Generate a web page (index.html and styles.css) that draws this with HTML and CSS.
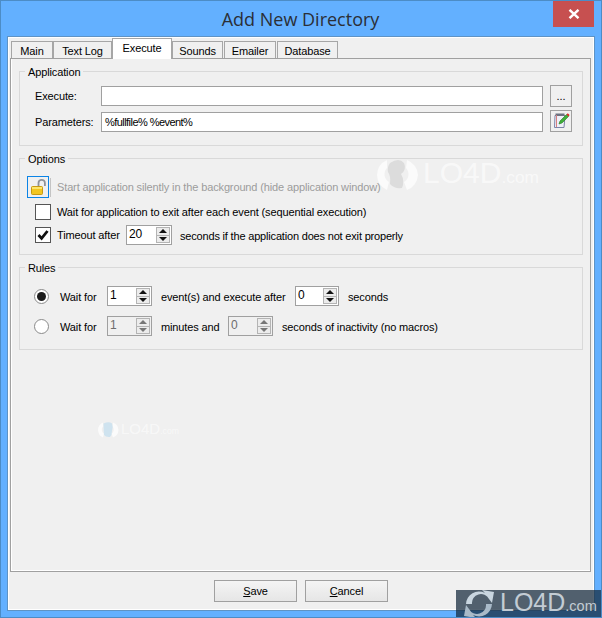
FILE: index.html
```html
<!DOCTYPE html>
<html lang="en">
<head>
<meta charset="utf-8">
<title>Add New Directory</title>
<link rel="stylesheet" href="styles.css">
</head>
<body>
<div class="window">
  <header class="titlebar">
    <h1 class="title">Add New Directory</h1>
    <button class="close" aria-label="Close">
      <svg width="12" height="10" viewBox="0 0 12 10"><path d="M1.5 0.8 L10.5 9.2 M10.5 0.8 L1.5 9.2" stroke="#fff" stroke-width="2.4" fill="none"/></svg>
    </button>
  </header>
  <div class="client">
    <nav class="tabs">
      <span class="tab tab-main">Main</span>
      <span class="tab tab-log">Text Log</span>
      <span class="tab tab-exec active">Execute</span>
      <span class="tab tab-sounds">Sounds</span>
      <span class="tab tab-mail">Emailer</span>
      <span class="tab tab-db">Database</span>
    </nav>
    <main class="pane">
      <fieldset class="group">
        <legend>Application</legend>
        <div class="body body-app">
          <div class="row">
            <label class="field-label">Execute:</label>
            <span class="input"></span>
            <button class="tool">...</button>
          </div>
          <div class="row row-end">
            <label class="field-label">Parameters:</label>
            <span class="input">%fullfile% %event%</span>
            <button class="tool">
              <svg width="18" height="18" viewBox="0 0 18 18">
                <path d="M3 3.5 H13 L12 15.5 H2.5 Z" fill="#eef0f8" stroke="#7d84a8"/>
                <path d="M3.5 1.5 H12.5 V4 H3.5 Z" fill="#6d7280"/>
                <path d="M4.5 3 V15" stroke="#d88080" stroke-width="1"/>
                <path d="M7 12 L8 9 L14.5 2.5 L16.5 4.5 L10 11 Z" fill="#3fae3a" stroke="#237a22" stroke-width=".6"/>
                <path d="M14.5 2.5 L15.8 1.2 L17.6 3 L16.5 4.5 Z" fill="#e02a20"/>
              </svg>
            </button>
          </div>
        </div>
      </fieldset>

      <fieldset class="group">
        <legend>Options</legend>
        <div class="body body-opt">
          <div class="row-lock">
            <button class="lock" aria-label="Toggle silent">
              <svg width="18" height="18" viewBox="0 0 18 18">
                <path d="M9.5 9 V5 A3.2 3.2 0 0 1 15.9 5 V8" fill="none" stroke="#8f9299" stroke-width="1.8"/>
                <rect x="2.5" y="8.5" width="11" height="8" rx="1" fill="#f3c620" stroke="#c79a12"/>
                <rect x="3" y="9" width="10" height="2" fill="#fde66a"/>
              </svg>
            </button>
            <span class="sep"></span>
            <span class="muted">Start application silently in the background (hide application window)</span>
          </div>
          <div class="row-check">
            <span class="check"></span>
            <span>Wait for application to exit after each event (sequential execution)</span>
          </div>
          <div class="row-timeout">
            <span class="check">
              <svg width="14" height="14" viewBox="0 0 14 14"><path d="M2.5 7 L5.6 10.4 L11.5 3" fill="none" stroke="#111" stroke-width="2.8"/></svg>
            </span>
            <span class="timeout-label">Timeout after</span>
            <span class="spin w46"><span class="val">20</span><span class="arrows"><i class="up"></i><i class="down"></i></span></span>
            <span class="timeout-tail">seconds if the application does not exit properly</span>
          </div>
        </div>
      </fieldset>

      <fieldset class="group">
        <legend>Rules</legend>
        <div class="body body-rules">
          <div class="rule">
            <span class="radio on"></span>
            <span class="wait">Wait for</span>
            <span class="spin w45"><span class="val">1</span><span class="arrows"><i class="up"></i><i class="down"></i></span></span>
            <span class="after-spin w-event">event(s) and execute after</span>
            <span class="spin w44"><span class="val">0</span><span class="arrows"><i class="up"></i><i class="down"></i></span></span>
            <span class="after-spin">seconds</span>
          </div>
          <div class="rule">
            <span class="radio"></span>
            <span class="wait">Wait for</span>
            <span class="spin w45 off"><span class="val">1</span><span class="arrows"><i class="up"></i><i class="down"></i></span></span>
            <span class="after-spin w-min">minutes and</span>
            <span class="spin w45 off"><span class="val">0</span><span class="arrows"><i class="up"></i><i class="down"></i></span></span>
            <span class="after-spin">seconds of inactivity (no macros)</span>
          </div>
        </div>
      </fieldset>
    </main>
    <footer class="actions">
      <button class="btn"><u>S</u>ave</button>
      <button class="btn"><u>C</u>ancel</button>
    </footer>
  </div>

  <div class="mark mark-mid">
    <svg width="44" height="36" viewBox="0 0 44 36"><path d="M12 3 A17 17 0 0 0 2 18 A17 17 0 0 0 12 33 L14 25 A9 9 0 0 1 12 11 Z M32 3 A17 17 0 0 1 43 18 A17 17 0 0 1 32 33 L29 25 A9 9 0 0 0 31 11 Z" fill="#fff" opacity=".7"/><path d="M15 6 Q24 0 29 6 Q32 13 26 17 Q30 24 27 31 Q19 32 15 27 Q16 19 13 15 Q12 10 15 6 Z" fill="#dcdcdc"/></svg>
    <span>LO4D<small>.com</small></span>
  </div>
  <div class="mark mark-low">
    <svg width="22" height="18" viewBox="0 0 44 36"><path d="M12 3 A17 17 0 0 0 2 18 A17 17 0 0 0 12 33 L14 25 A9 9 0 0 1 12 11 Z M32 3 A17 17 0 0 1 43 18 A17 17 0 0 1 32 33 L29 25 A9 9 0 0 0 31 11 Z" fill="#fff" opacity=".7"/><path d="M13 5 Q24 0 30 5 Q33 13 30 20 Q30 28 26 32 Q18 33 14 28 Q13 18 13 5 Z" fill="#cfe3ef"/></svg>
    <span>LO4D<small>.com</small></span>
  </div>
  <div class="mark mark-corner">
    <svg width="36" height="28" viewBox="0 0 36 28"><path d="M5 14 A13 13 0 0 1 24 3 L21 0 L33 2 L31 13 L28 9 A9 9 0 0 0 11 14 Z" fill="#c9d6e0"/><path d="M31 14 A13 13 0 0 1 12 25 L15 28 L3 26 L5 15 L8 19 A9 9 0 0 0 25 14 Z" fill="#a9bac8"/></svg>
    <span>LO4D<small>.com</small></span>
  </div>
</div>
</body>
</html>
```
FILE: styles.css
```css
* { box-sizing: border-box; }
html, body { margin: 0; padding: 0; }
body {
  width: 602px;
  height: 618px;
  overflow: hidden;
  font: 11px/14px "Liberation Sans", Arial, sans-serif;
  letter-spacing: -0.13px;
  color: #000;
}
button { font: inherit; color: inherit; padding: 0; letter-spacing: inherit; }

.window {
  position: relative;
  width: 602px;
  height: 618px;
  background: #63b0ff;
  border: 1px solid #4c8cc6;
  display: flex;
  flex-direction: column;
  overflow: hidden;
}
.titlebar {
  flex: none;
  height: 36px;
  display: flex;
  align-items: center;
  justify-content: center;
}
.title {
  margin: 0 0 0 -1px;
  font: 400 18px/24px "Open Sans", sans-serif;
  letter-spacing: 0;
  color: #2b2f36;
}
.close {
  position: absolute;
  top: 0;
  right: 7px;
  width: 41px;
  height: 26px;
  border: 0;
  background: #c75050;
  display: flex;
  align-items: center;
  justify-content: center;
}

.client {
  flex: none;
  margin: 0 7px;
  height: 573px;
  width: 586px;
  background: #f0f0f0;
  border: 1px solid #fff;
  display: flex;
  flex-direction: column;
  outline: 1px solid #5f93c4;
}

.tabs {
  flex: none;
  height: 21px;
  display: flex;
  align-items: flex-end;
  padding-left: 2px;
  position: relative;
  z-index: 1;
  margin-bottom: -1px;
}
.tab {
  height: 17px;
  margin-bottom: 1px;
  display: flex;
  align-items: center;
  justify-content: center;
  background: #f0f0f0;
  border: 1px solid #a6a6a6;
  border-bottom: 0;
  margin-right: 1px;
  padding-top: 1px;
}
.tab.active {
  height: 21px;
  margin-bottom: 0;
  background: #fff;
  padding: 0 0 2px;
  margin-right: 0;
}
.tab-main { width: 42px; margin-right: 0; }
.tab-log { width: 59px; margin-right: 0; }
.tab-exec { width: 60px; }
.tab-sounds { width: 51px; }
.tab-mail { width: 52px; }
.tab-db { width: 61px; }

.pane {
  flex: none;
  margin-left: 1px;
  width: 581px;
  height: 514px;
  background: #f0f0f0;
  border: 1px solid #a0a0a0;
  box-shadow: inset 1px 0 0 #fff, inset 0 -1px 0 #fff;
  padding: 5px 7px 0 8px;
  display: flex;
  flex-direction: column;
  gap: 5px;
}

.group {
  margin: 0;
  padding: 0;
  min-width: 0;
  border: 1px solid #d9d9d9;
}
.group legend {
  margin-left: 5px;
  padding: 2px 3px 0;
  line-height: 13px;
}
.body-app { padding: 6px 10px 13px 15px; display: flex; flex-direction: column; gap: 3px; }
.body-opt { padding: 10px 10px 9px 7px; }
.body-rules { padding: 11px 10px 13px 14px; display: flex; flex-direction: column; gap: 10px; }

.row { display: flex; align-items: center; height: 22px; }
.row-end { align-items: flex-end; }
.field-label { width: 66px; line-height: 20px; }
.input {
  width: 442px;
  height: 20px;
  background: #fff;
  border: 1px solid #a0a0a0;
  padding: 0 3px;
  line-height: 19px;
  letter-spacing: -0.55px;
}
.tool {
  margin-left: 7px;
  width: 22px;
  height: 22px;
  background: #f0f0f0;
  border: 1px solid #a0a0a0;
  display: flex;
  align-items: center;
  justify-content: center;
}

.row-lock { display: flex; align-items: center; height: 22px; }
.lock {
  width: 22px;
  height: 22px;
  background: #f0f0f0;
  border: 1px solid #0b84e6;
  display: flex;
  align-items: center;
  justify-content: center;
}
.sep { width: 1px; height: 19px; margin: 0 6px 0 1px; background: #c4c4c4; }
.muted { color: #9c9c9c; }

.row-check { display: flex; align-items: center; height: 16px; margin: 6px 0 0 8px; }
.row-check .check { margin-right: 6px; }
.check {
  flex: none;
  width: 16px;
  height: 16px;
  background: #fff;
  border: 1px solid #555;
  display: flex;
  align-items: center;
  justify-content: center;
}
.row-timeout { display: flex; align-items: center; height: 20px; margin: 5px 0 0 8px; }
.timeout-label { margin-left: 6px; width: 69px; white-space: nowrap; }
.timeout-tail { margin-left: 8px; padding-top: 2px; white-space: nowrap; letter-spacing: -0.18px; }

.spin {
  flex: none;
  height: 20px;
  background: #fff;
  border: 1px solid #a0a0a0;
  display: flex;
  justify-content: space-between;
  padding: 1px;
}
.w46 { width: 46px; }
.w45 { width: 45px; }
.w44 { width: 44px; }
.val { padding-left: 1px; line-height: 15px; font-size: 12px; }
.arrows {
  width: 14px;
  display: flex;
  flex-direction: column;
}
.up, .down {
  flex: 1;
  display: flex;
  align-items: center;
  justify-content: center;
  background: #ececec;
  border: 1px solid #b4b4b4;
}
.down { border-top: 0; }
.up::after, .down::after {
  content: "";
  width: 0;
  height: 0;
  border-left: 4px solid transparent;
  border-right: 4px solid transparent;
}
.up::after { border-bottom: 4px solid #111; }
.down::after { border-top: 4px solid #111; }
.spin.off { background: #f0f0f0; }
.spin.off .val { color: #6d6d6d; }
.spin.off .up::after { border-bottom-color: #777; }
.spin.off .down::after { border-top-color: #777; }

.rule { display: flex; align-items: center; height: 20px; white-space: nowrap; }
.rule .wait, .rule .after-spin { padding-top: 1px; }
.radio {
  flex: none;
  width: 15px;
  height: 15px;
  border-radius: 50%;
  background: #fff;
  border: 1px solid #8a8a8a;
  display: flex;
  align-items: center;
  justify-content: center;
}
.radio.on::after { content: ""; width: 9px; height: 9px; border-radius: 50%; background: #1c1c1c; }
.wait { margin-left: 11px; width: 47px; }
.after-spin { margin-left: 9px; }
.w-event { width: 134px; }
.w-min { width: 67px; }

.actions {
  flex: 1;
  display: flex;
  justify-content: center;
  gap: 8px;
  padding-top: 8px;
}
.btn {
  width: 83px;
  height: 22px;
  border: 1px solid #a0a0a0;
  background: linear-gradient(#f4f4f4, #e6e6e6);
}

.mark { position: absolute; display: flex; align-items: center; pointer-events: none; letter-spacing: 0; }
.mark small { font-size: .58em; }
.mark-mid { left: 374px; top: 154px; color: rgba(255,255,255,.6); font-size: 30px; line-height: 36px; gap: 4px; }
.mark-low { left: 96px; top: 419px; color: rgba(255,255,255,.55); font-size: 15px; line-height: 18px; gap: 2px; }
.mark-corner { left: 455px; top: 589px; width: 146px; height: 28px; padding-left: 5px; gap: 3px; background: rgba(20,40,60,.72); color: #c3ccd4; font-size: 25px; line-height: 28px; }
```
